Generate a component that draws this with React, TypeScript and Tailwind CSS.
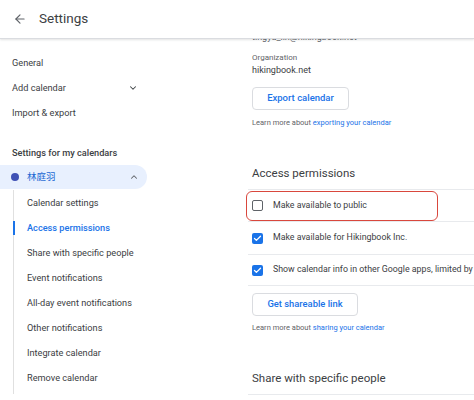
import { ArrowLeft, ChevronDown, ChevronUp, Check } from "lucide-react"

const subItems = [
  "Calendar settings",
  "Access permissions",
  "Share with specific people",
  "Event notifications",
  "All-day event notifications",
  "Other notifications",
  "Integrate calendar",
  "Remove calendar",
]

function CheckBox({ checked }: { checked: boolean }) {
  if (checked) {
    return (
      <div className="w-[11px] h-[11px] rounded-[2px] bg-[#1a73e8] flex items-center justify-center shrink-0">
        <Check size={9} strokeWidth={3.5} color="white" />
      </div>
    )
  }
  return <div className="w-[11px] h-[11px] rounded-[2px] border-[1.5px] border-[#5f6368] shrink-0" />
}

export default function App() {
  return (
    <div
      className="w-[474px] h-[400px] overflow-hidden bg-white text-[#3c4043] flex flex-col"
      style={{ fontFamily: "Roboto, 'Noto Sans CJK TC', sans-serif" }}
    >
      {/* top bar */}
      <div className="h-[39px] shrink-0 flex items-center pl-[13px] border-b border-[#dadce0] shadow-[0_1px_2px_rgba(60,64,67,0.15)] relative z-10 bg-white">
        <ArrowLeft size={14} strokeWidth={2} color="#5f6368" />
        <span className="ml-[12px] text-[13.5px] text-[#3c4043] -mt-[1px]">Settings</span>
      </div>

      <div className="flex flex-1 min-h-0">
        {/* sidebar */}
        <div className="w-[236px] shrink-0 pt-[11px] text-[9.2px]">
          <div className="h-[25px] flex items-center pl-[12px]">General</div>
          <div className="h-[25px] flex items-center pl-[12px] pr-[98px] justify-between">
            <span>Add calendar</span>
            <ChevronDown size={10} strokeWidth={2.5} color="#3c4043" />
          </div>
          <div className="h-[25px] flex items-center pl-[12px]">Import &amp; export</div>

          <div className="h-[25px] flex items-center pl-[12px] mt-[15px] font-medium text-[#3c4043]">
            Settings for my calendars
          </div>
          <div className="h-[24px] w-[147px] rounded-r-full bg-[#e8f0fe] flex items-center pl-[11px] pr-[8px]">
            <div className="w-[8px] h-[8px] rounded-full bg-[#3f51b5]" />
            <span className="ml-[8px] text-[#1967d2] text-[9.5px]">林庭羽</span>
            <div className="flex-1" />
            <ChevronUp size={10} strokeWidth={2.5} color="#5f6368" />
          </div>
          <div className="ml-[13px] mt-[1px] border-l border-[#e0e0e0] pb-[4px]">
            {subItems.map((s) => (
              <div
                key={s}
                className={
                  s === "Access permissions"
                    ? "h-[25px] flex items-center pl-[13px] text-[#1a73e8] font-medium relative"
                    : "h-[25px] flex items-center pl-[13px] text-[#3c4043]"
                }
              >
                {s === "Access permissions" && (
                  <div className="absolute -left-[1px] top-[6px] w-[2px] h-[14px] bg-[#1a73e8]" />
                )}
                {s}
              </div>
            ))}
          </div>
        </div>

        {/* main */}
        <div className="flex-1 min-w-0 overflow-hidden pl-[16px] whitespace-nowrap">
          <div className="-mt-[9px] h-[15px] flex items-center text-[9px] text-[#5f6368]">tingyu_lin@hikingbook.net</div>
          <div className="mt-[7px] h-[12px] flex items-center text-[8px] text-[#5f6368]">Organization</div>
          <div className="h-[13px] flex items-center text-[9px] text-[#3c4043]">hikingbook.net</div>
          <div className="mt-[10px] w-[97px] h-[23px] border border-[#dadce0] rounded-[4px] flex items-center justify-center text-[9.5px] font-medium text-[#1a73e8]">
            Export calendar
          </div>
          <div className="mt-[8px] h-[10px] flex items-center text-[7.5px] text-[#5f6368]">
            Learn more about&nbsp;<span className="text-[#1a73e8]">exporting your calendar</span>
          </div>

          <div className="mt-[38px] h-[16px] flex items-center text-[11.5px] text-[#3c4043]">Access permissions</div>

          <div className="mt-[7px] -ml-[4px] border-t border-[#e8eaed]">
            <div className="relative h-[32px] flex items-center pl-[4px] border-b border-[#e8eaed]">
              <div className="absolute left-[-2px] top-[1px] w-[192px] h-[30px] border-[1.5px] border-[#d9473d] rounded-[6px]" />
              <CheckBox checked={false} />
              <span className="ml-[10px] text-[8.8px]">Make available to public</span>
            </div>
            <div className="h-[33px] flex items-center pl-[4px] border-b border-[#e8eaed]">
              <CheckBox checked />
              <span className="ml-[10px] text-[8.8px]">Make available for Hikingbook Inc.</span>
            </div>
            <div className="h-[31px] flex items-center pl-[4px] border-b border-[#e8eaed]">
              <CheckBox checked />
              <span className="ml-[10px] text-[8.8px]">Show calendar info in other Google apps, limited by your access permissions</span>
            </div>
          </div>

          <div className="mt-[7px] w-[106px] h-[23px] border border-[#dadce0] rounded-[4px] flex items-center justify-center text-[9.4px] font-medium text-[#1a73e8]">
            Get shareable link
          </div>
          <div className="mt-[7px] h-[10px] flex items-center text-[7.5px] text-[#5f6368]">
            Learn more about&nbsp;<span className="text-[#1a73e8]">sharing your calendar</span>
          </div>

          <div className="mt-[38px] h-[16px] flex items-center text-[11.5px] text-[#3c4043]">Share with specific people</div>
          <div className="mt-[7px] -ml-[4px] border-t border-[#e8eaed]" />
        </div>
      </div>
    </div>
  )
}
